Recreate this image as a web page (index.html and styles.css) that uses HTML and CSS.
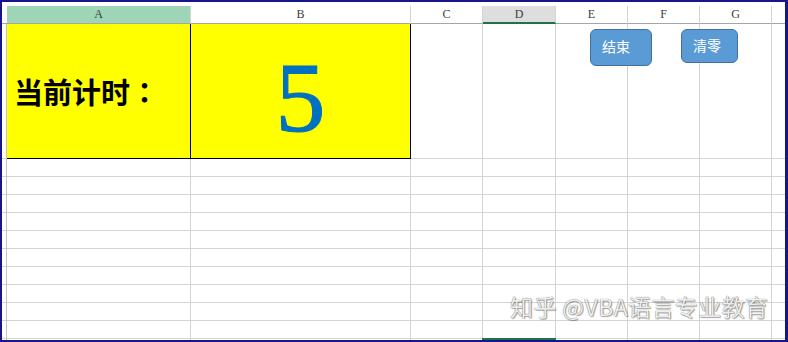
FILE: index.html
```html
<!DOCTYPE html>
<html>
<head>
  <meta charset="UTF-8" />
  <link rel="stylesheet" href="styles.css">
</head>
<body>
  <div class="frame">
    <div class="line head-row">
      <div class="cell w-gut"></div>
      <div class="cell w-a head-a">A</div>
      <div class="cell w-b">B</div>
      <div class="cell w-n">C</div>
      <div class="cell w-d head-sel">D</div>
      <div class="cell w-n">E</div>
      <div class="cell w-n">F</div>
      <div class="cell w-n">G</div>
      <div class="cell w-h"></div>
    </div>

    <div class="line timer-row">
      <div class="cell w-gut"></div>
      <div class="cell w-a timer-cell timer-label">当前计时<span class="colon">：</span></div>
      <div class="cell w-b timer-cell timer-value">5</div>
      <div class="cell w-n"></div>
      <div class="cell w-d"></div>
      <div class="cell w-n"></div>
      <div class="cell w-n"></div>
      <div class="cell w-n"></div>
      <div class="cell w-h"></div>
    </div>

    <div class="line grid-rows">
      <div class="col w-gut"></div>
      <div class="col w-a"></div>
      <div class="col w-b"></div>
      <div class="col w-n"></div>
      <div class="col w-d"><div class="selection"></div></div>
      <div class="col w-n"></div>
      <div class="col w-n"></div>
      <div class="col w-n"></div>
      <div class="col w-h"></div>
    </div>

    <div class="shape-btn btn-stop">结束</div>
    <div class="shape-btn btn-reset">清零</div>

    <div class="watermark">知乎 @VBA语言专业教育</div>
  </div>
</body>
</html>
```

FILE: styles.css
```css
* { box-sizing: border-box; }
body {
  margin: 0;
  background: #ffffff;
  font-family: "Noto Sans CJK SC", "Liberation Sans", sans-serif;
}
.frame {
  position: relative;
  width: 788px;
  height: 342px;
  padding-top: 4px;
  border: 2px solid #16168a;
  border-right-width: 3px;
  display: flex;
  flex-direction: column;
  overflow: hidden;
  background: #ffffff;
}
.line {
  display: flex;
}
.cell, .col {
  border-right: 1px solid #d4d4d4;
  flex-shrink: 0;
}
.w-gut { width: 5px; border-right-color: #c4c4c4; }
.w-a { width: 184px; }
.w-b { width: 220px; }
.w-n { width: 72px; }
.w-d { width: 73px; }
.w-h { flex: 1; border-right: none; }

/* column headers */
.head-row {
  height: 18px;
}
.head-row .cell {
  height: 18px;
  border-bottom: 1px solid #a6a6a6;
  font-family: "Liberation Serif", serif;
  font-size: 12px;
  line-height: 17px;
  color: #3c3c3c;
  text-align: center;
}
.head-row .w-gut { border-right: none; }
.head-a {
  background: #9fd5b7;
}
.head-sel {
  background: #dedede;
  border-bottom: 2px solid #217346 !important;
}

/* merged timer row */
.timer-row {
  height: 135px;
}
.timer-row .cell {
  border-bottom: 1px solid #d4d4d4;
}
.timer-cell {
  background: #ffff00;
  border-right-color: #000 !important;
  border-bottom-color: #000 !important;
  display: flex;
  align-items: center;
}
.timer-label {
  padding-left: 7px;
  font-size: 29px;
  font-weight: 700;
  line-height: 1;
  color: #000;
}
.colon {
  font-family: "Noto Sans CJK JP", sans-serif;
}
.timer-value {
  justify-content: center;
  padding-top: 14px;
  font-family: "Liberation Serif", serif;
  font-size: 100px;
  line-height: 1;
  color: #0070c0;
  -webkit-text-stroke: 1px #0070c0;
}

/* empty rows */
.grid-rows {
  flex: 1;
  background: repeating-linear-gradient(to bottom, transparent 0 17px, #d4d4d4 17px 18px);
}
.col.w-d {
  display: flex;
  flex-direction: column;
}
.selection {
  margin-top: auto;
  margin-left: -1px;
  margin-right: -1px;
  height: 2px;
  background: #217346;
}

/* form buttons floating on the sheet */
.shape-btn {
  position: absolute;
  top: 27px;
  padding: 7px 0 0 11px;
  background: #5b9bd5;
  border: 1px solid #41719c;
  border-radius: 6px;
  color: #ffffff;
  font-size: 14px;
  line-height: 18px;
}
.btn-stop {
  left: 588px;
  width: 62px;
  height: 37px;
}
.btn-reset {
  left: 679px;
  width: 57px;
  height: 34px;
  padding-top: 6px;
}

.watermark {
  position: absolute;
  left: 508px;
  top: 291px;
  font-size: 23px;
  line-height: 26px;
  letter-spacing: 0.4px;
  color: rgba(255, 255, 255, 0.92);
  text-shadow: 0 0 1px rgba(0, 0, 0, 0.75), 1px 1px 1px rgba(0, 0, 0, 0.3);
  white-space: nowrap;
}
```
